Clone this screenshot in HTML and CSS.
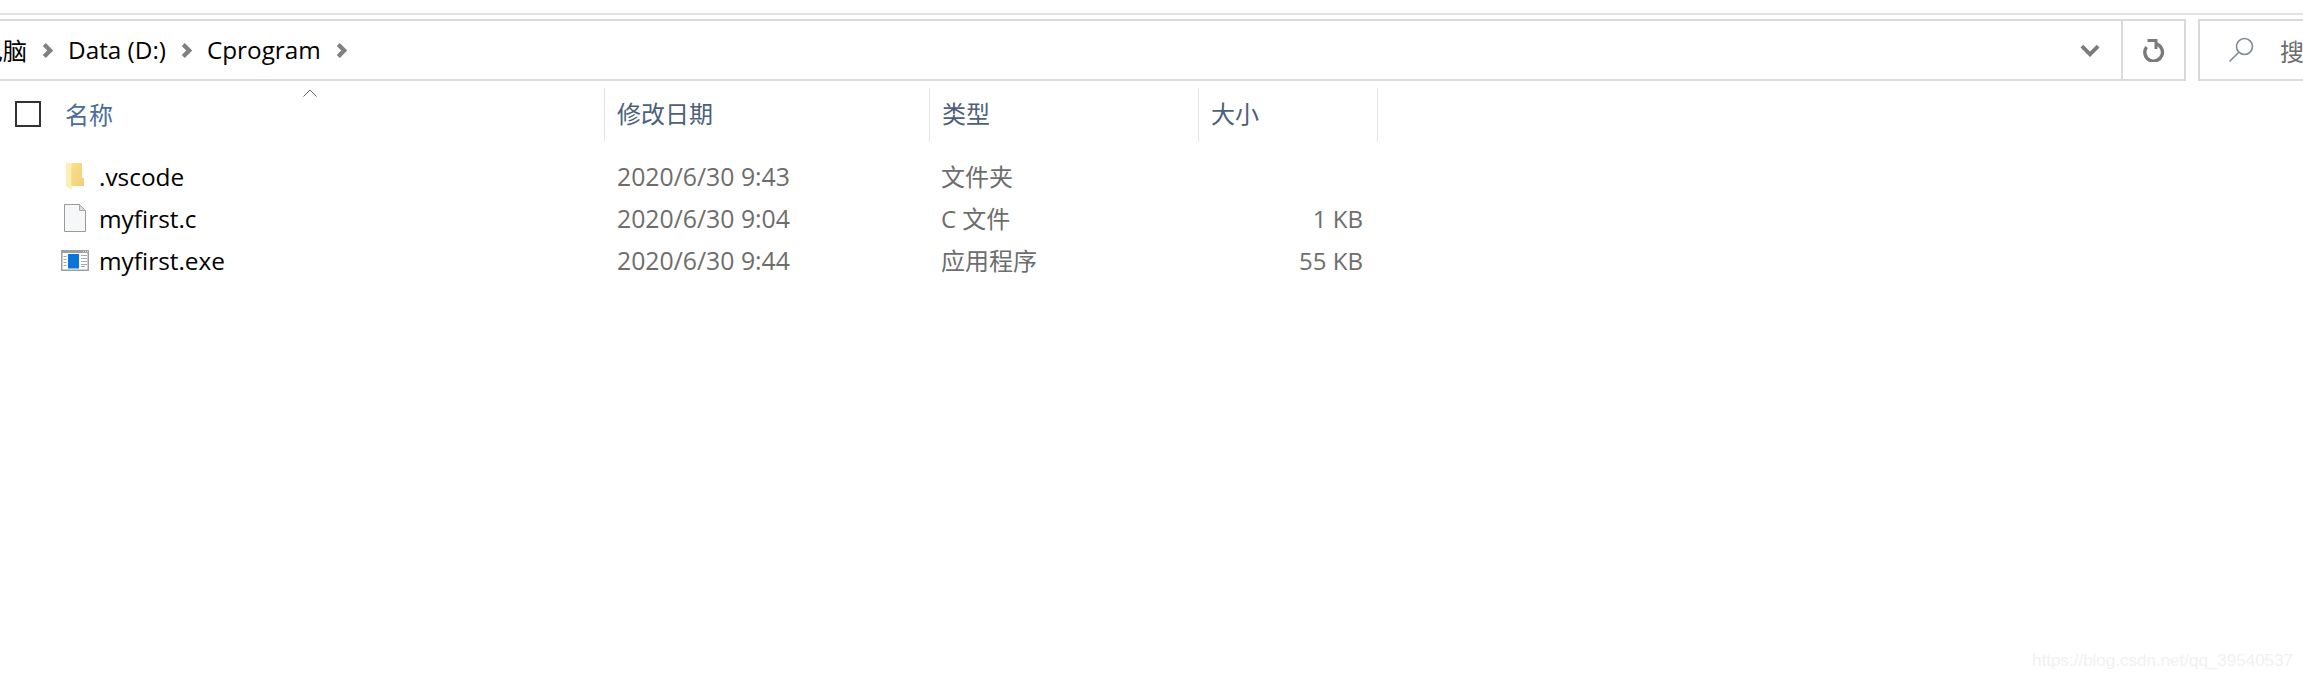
FILE: index.html
```html
<!DOCTYPE html>
<html lang="zh-CN">
<head>
  <meta charset="UTF-8">
  <title>Cprogram</title>
  <link rel="stylesheet" href="styles.css">
</head>
<body>
  <!-- Barra de direcciones -->
  <div class="top-line"></div>
  <div class="nav-row">
    <div class="address">
      <div class="crumbs">
        <span class="crumb crumb-first">此电脑</span>
        <svg class="sep" viewBox="0 0 10 14"><path d="M2 1.5 7.5 7 2 12.5"/></svg>
        <span class="crumb">Data (D:)</span>
        <svg class="sep" viewBox="0 0 10 14"><path d="M2 1.5 7.5 7 2 12.5"/></svg>
        <span class="crumb">Cprogram</span>
        <svg class="sep" viewBox="0 0 10 14"><path d="M2 1.5 7.5 7 2 12.5"/></svg>
      </div>
      <svg class="dropdown" viewBox="0 0 18 12"><path d="M1.5 2 9 9.5 16.5 2"/></svg>
      <div class="refresh">
        <svg viewBox="0 0 22 24" width="22" height="24"><path class="refresh-arc" d="M13 5.800A8.800 8.800 0 1 1 3.600 9"/><path class="refresh-tip" d="M4.500 1h10v10h-3V4h-7z"/></svg>
      </div>
    </div>
    <div class="search">
      <svg viewBox="0 0 26 26" width="26" height="26"><circle cx="16.500" cy="9.500" r="8"/><path d="M10.800 15.200 1.500 24.500"/></svg>
      <span>搜</span>
    </div>
  </div>

  <!-- Cabecera de columnas -->
  <div class="head-row">
    <div class="head-name">
      <span class="checkbox"></span>
      <span class="name-label">名称</span>
      <svg class="sort" viewBox="0 0 14 8"><path d="M.5 7.500 7 1l6.500 6.500"/></svg>
    </div>
    <div class="head-cell">修改日期</div>
    <div class="head-cell">类型</div>
    <div class="head-cell head-last">大小</div>
  </div>

  <!-- Lista de archivos -->
  <div class="files">
    <div class="file">
      <div class="file-name">
        <span class="icon">
          <svg viewBox="0 0 18 27" width="18" height="27">
            <defs>
              <linearGradient id="folderBack" x1="0" y1="0" x2="1" y2="1">
                <stop offset="0" stop-color="#fbe08c"/>
                <stop offset="1" stop-color="#f1ce74"/>
              </linearGradient>
            </defs>
            <path fill="url(#folderBack)" d="M5 0h11v15h2v8H5z"/>
            <path fill="#fdeeb4" d="M0 0h5.500v27L0 23z"/>
            <path fill="#f6d987" d="M5.500 6h1v17h-1z"/>
          </svg>
        </span>
        <span class="file-label">.vscode</span>
      </div>
      <div class="file-cell">2020/6/30 9:43</div>
      <div class="file-cell">文件夹</div>
      <div class="file-size"></div>
    </div>
    <div class="file">
      <div class="file-name">
        <span class="icon">
          <svg viewBox="0 0 22 28" width="22" height="28">
            <path fill="#f6f7f9" stroke="#9a9a9a" d="M.5.5h15l6 6v21H.500z"/>
            <path fill="#dcdcdc" stroke="#a8a8a8" d="M15.500.5v6h6z"/>
          </svg>
        </span>
        <span class="file-label">myfirst.c</span>
      </div>
      <div class="file-cell">2020/6/30 9:04</div>
      <div class="file-cell">C 文件</div>
      <div class="file-size">1 KB</div>
    </div>
    <div class="file">
      <div class="file-name">
        <span class="icon">
          <svg viewBox="0 0 28 21" width="28" height="21">
            <rect x="0" y="0" width="28" height="21" fill="#9c9fa3"/>
            <rect x="1.500" y="3" width="25" height="16.500" fill="#fff"/>
            <rect x="7" y="4" width="11" height="14.500" fill="#0a74d8"/>
            <path fill="#a9a9a9" d="M2.500 6h3v1h-3zM2.500 9h3v1h-3zM2.500 12h3v1h-3zM2.500 15h3v1h-3zM20 5h6v1h-6zM20 8h6v1h-6zM20 11h6v1h-6zM20 14h6v1h-6zM20 16h4v1h-4z"/>
            <path fill="#e4e4e4" d="M22 1h1v1h-1zM24 1h1v1h-1zM26 1h1v1h-1z"/>
          </svg>
        </span>
        <span class="file-label">myfirst.exe</span>
      </div>
      <div class="file-cell">2020/6/30 9:44</div>
      <div class="file-cell">应用程序</div>
      <div class="file-size">55 KB</div>
    </div>
  </div>

  <div class="watermark">https://blog.csdn.net/qq_39540537</div>
</body>
</html>
```

FILE: styles.css
```css
/* Estilos globales */
html, body {
  margin: 0;
  padding: 0;
  height: 100%;
  background-color: #fff;
  overflow: hidden;
}
body {
  position: relative;
  font-family: "Open Sans", "Noto Sans CJK SC", sans-serif;
  padding-top: 13px;
  box-sizing: border-box;
}
.top-line {
  height: 2px;
  background: #e2e2e2;
}
/* Barra de direcciones */
.nav-row {
  display: flex;
  height: 62px;
  margin-top: 4px;
  overflow: hidden;
}
.address {
  display: flex;
  align-items: center;
  width: 2186px;
  flex-shrink: 0;
  box-sizing: border-box;
  border: 2px solid #dadada;
  border-left: none;
  overflow: hidden;
}
.crumbs {
  display: flex;
  align-items: center;
  flex: 1;
  font-size: 24.3px;
  color: #000;
  margin-left: -21px;
}
.crumb {
  white-space: nowrap;
  line-height: 40px;
}
.crumb-first {
  width: 48px;
  margin-right: 15px;
  direction: rtl;
  font-family: "Noto Sans CJK SC", sans-serif;
}
.sep {
  width: 11px;
  height: 15px;
  margin-right: 15px;
  fill: none;
  stroke: #808080;
  stroke-width: 4;
}
.crumb + .sep {
  margin-left: 15px;
}
.crumb-first + .sep {
  margin-left: 0;
}
.dropdown {
  width: 20px;
  height: 13px;
  margin-right: 21px;
  fill: none;
  stroke: #7b7b7b;
  stroke-width: 3.6;
}
.refresh {
  display: flex;
  align-items: center;
  justify-content: center;
  width: 61px;
  height: 100%;
  border-left: 2px solid #dadada;
}
.refresh-arc {
  fill: none;
  stroke: #7b7b7b;
  stroke-width: 3.4;
}
.refresh-tip {
  fill: #7b7b7b;
}
.search {
  display: flex;
  align-items: center;
  flex: 1;
  margin-left: 12px;
  padding-left: 28px;
  border: 2px solid #dadada;
  border-right: none;
  font-family: "Noto Sans CJK SC", sans-serif;
  font-size: 24px;
  color: #6d6d6d;
}
.search svg {
  margin-right: 26px;
  fill: none;
  stroke: #808a94;
  stroke-width: 1.6;
}
/* Cabecera de columnas */
.head-row {
  display: grid;
  grid-template-columns: 604px 325px 269px 180px;
  height: 54px;
  margin-top: 7px;
  font-family: "Noto Sans CJK SC", sans-serif;
  font-size: 24px;
  color: #4c607a;
}
.head-name {
  position: relative;
  display: flex;
  align-items: center;
  padding-left: 15px;
  padding-bottom: 3px;
}
.checkbox {
  width: 26px;
  height: 26px;
  box-sizing: border-box;
  border: 2px solid #333;
  margin-right: 24px;
}
.name-label {
  color: #4a6c9c;
}
.sort {
  position: absolute;
  left: 303px;
  top: 1px;
  width: 14px;
  height: 8px;
  fill: none;
  stroke: #666;
  stroke-width: 1;
}
.head-cell {
  display: flex;
  align-items: center;
  padding-left: 12px;
  padding-bottom: 5px;
  border-left: 1px solid #e5e5e5;
}
.head-last {
  border-right: 1px solid #e5e5e5;
}
/* Lista de archivos */
.files {
  margin-top: 13px;
}
.file {
  display: grid;
  grid-template-columns: 604px 325px 269px 165px;
  align-items: center;
  height: 42px;
}
.file-name {
  display: flex;
  align-items: center;
  font-size: 24.4px;
  color: #000;
}
.file-label {
  margin-left: -1px;
}
.icon {
  display: flex;
  align-items: center;
  justify-content: center;
  width: 28px;
  margin-left: 61px;
  margin-right: 11px;
}
.file-cell,
.file-size {
  font-size: 24.8px;
  color: #6d6d6d;
  padding-left: 13px;
}
.file-cell:nth-child(3) {
  font-size: 24px;
  padding-left: 12px;
  padding-bottom: 2px;
}
.file-size {
  font-size: 24px;
  text-align: right;
  padding-left: 0;
}
/* Marca de agua */
.watermark {
  position: absolute;
  right: 10px;
  bottom: 7px;
  font-family: "Liberation Sans", sans-serif;
  font-size: 17px;
  color: #f1f1f1;
}
```
